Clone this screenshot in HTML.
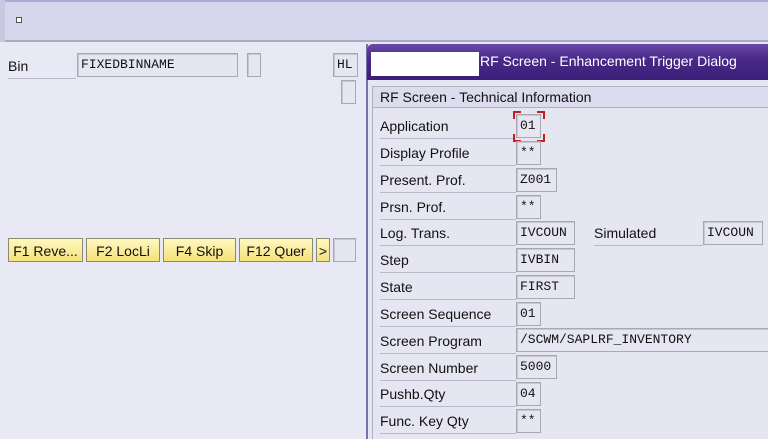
<!DOCTYPE html>
<html><head><style>
body{margin:0;width:768px;height:439px;overflow:hidden;background:#e9e9f5;font-family:"Liberation Sans",sans-serif;position:relative}
.a{position:absolute}
.lbl{position:absolute;font-size:14px;color:#111;border-bottom:1px solid #b8b8c8;height:24px;line-height:24px}
.f{position:absolute;background:#e6e6f2;border:1px solid #a8a8b4;box-shadow:inset 1px 1px 0 #c8c8d4;font-family:"Liberation Mono",monospace;font-size:13px;line-height:22px;height:22px;padding-left:3px;box-sizing:content-box;color:#111}
.b{position:absolute;top:238px;height:24px;background:linear-gradient(#fff8c0,#f5e27a);border:1px solid #8a8a70;font-size:14px;line-height:24px;text-align:center;box-sizing:border-box;color:#111}
.c{position:absolute;width:6px;height:6px;border-color:#c02020;border-style:solid;border-width:0}
</style></head><body>
<div class="a" style="left:0;top:0;width:768px;height:42px;background:#d6d6ec;border-top:2px solid #b0a8d8;border-bottom:2px solid #aaaac4;box-sizing:border-box"></div>
<div class="a" style="left:0;top:0;width:5px;height:42px;background:#c8c8e0"></div>
<div class="a" style="left:16px;top:17px;width:4px;height:4px;border:1px solid #555;background:#fff"></div>
<div class="lbl" style="left:8px;top:54px;width:68px">Bin</div>
<div class="f" style="left:77px;top:53px;width:156px">FIXEDBINNAME</div>
<div class="f" style="left:247px;top:53px;width:12px;padding:0"></div>
<div class="f" style="left:333px;top:53px;width:20px">HL</div>
<div class="f" style="left:341px;top:80px;width:13px;padding:0"></div>
<div class="b" style="left:8px;width:75px">F1 Reve...</div>
<div class="b" style="left:86px;width:74px">F2 LocLi</div>
<div class="b" style="left:163px;width:73px">F4 Skip</div>
<div class="b" style="left:239px;width:74px">F12 Quer</div>
<div class="b" style="left:316px;width:14px">&gt;</div>
<div class="f" style="left:333px;top:238px;width:21px;padding:0"></div>
<!-- dialog -->
<div class="a" style="left:366px;top:44px;width:402px;height:395px;background:#e6e6f3;border-left:2px solid #7a70a8"></div>
<div class="a" style="left:367px;top:44px;width:401px;height:36px;background:linear-gradient(#6a4aa8,#4a2a8a 40%,#3a1e78);border-radius:6px 0 0 0"></div>
<div class="a" style="left:371px;top:52px;width:108px;height:24px;background:#fff"></div>
<div class="a" style="left:480px;top:51px;color:#fff;font-size:14px;line-height:20px">RF Screen - Enhancement Trigger Dialog</div>
<div class="a" style="left:372px;top:86px;width:396px;height:22px;background:#dcdcee;border:1px solid #b0b0c4;border-right:none;box-sizing:border-box;font-size:14px;line-height:20px;padding-left:7px;color:#111">RF Screen - Technical Information</div>
<div class="a" style="left:372px;top:108px;width:1px;height:331px;background:#b0b0c4"></div>

<div class="lbl" style="left:380px;top:114px;width:136px">Application</div>
<div class="f" style="left:516px;top:114px;width:20px">01</div>
<div class="c" style="left:513px;top:111px;border-left-width:2px;border-top-width:2px"></div>
<div class="c" style="left:537px;top:111px;border-right-width:2px;border-top-width:2px"></div>
<div class="c" style="left:513px;top:134px;border-left-width:2px;border-bottom-width:2px"></div>
<div class="c" style="left:537px;top:134px;border-right-width:2px;border-bottom-width:2px"></div>

<div class="lbl" style="left:380px;top:141px;width:136px">Display Profile</div>
<div class="f" style="left:516px;top:141px;width:20px">**</div>
<div class="lbl" style="left:380px;top:168px;width:136px">Present. Prof.</div>
<div class="f" style="left:516px;top:168px;width:36px">Z001</div>
<div class="lbl" style="left:380px;top:195px;width:136px">Prsn. Prof.</div>
<div class="f" style="left:516px;top:195px;width:20px">**</div>
<div class="lbl" style="left:380px;top:221px;width:136px">Log. Trans.</div>
<div class="f" style="left:516px;top:221px;width:54px">IVCOUN</div>
<div class="lbl" style="left:594px;top:221px;width:109px">Simulated</div>
<div class="f" style="left:703px;top:221px;width:55px">IVCOUN</div>
<div class="lbl" style="left:380px;top:248px;width:136px">Step</div>
<div class="f" style="left:516px;top:248px;width:54px">IVBIN</div>
<div class="lbl" style="left:380px;top:275px;width:136px">State</div>
<div class="f" style="left:516px;top:275px;width:54px">FIRST</div>
<div class="lbl" style="left:380px;top:302px;width:136px">Screen Sequence</div>
<div class="f" style="left:516px;top:302px;width:20px">01</div>
<div class="lbl" style="left:380px;top:329px;width:136px">Screen Program</div>
<div class="f" style="left:516px;top:328px;width:260px">/SCWM/SAPLRF_INVENTORY</div>
<div class="lbl" style="left:380px;top:356px;width:136px">Screen Number</div>
<div class="f" style="left:516px;top:355px;width:36px">5000</div>
<div class="lbl" style="left:380px;top:382px;width:136px">Pushb.Qty</div>
<div class="f" style="left:516px;top:382px;width:20px">04</div>
<div class="lbl" style="left:380px;top:409px;width:136px">Func. Key Qty</div>
<div class="f" style="left:516px;top:409px;width:20px">**</div>
</body></html>
